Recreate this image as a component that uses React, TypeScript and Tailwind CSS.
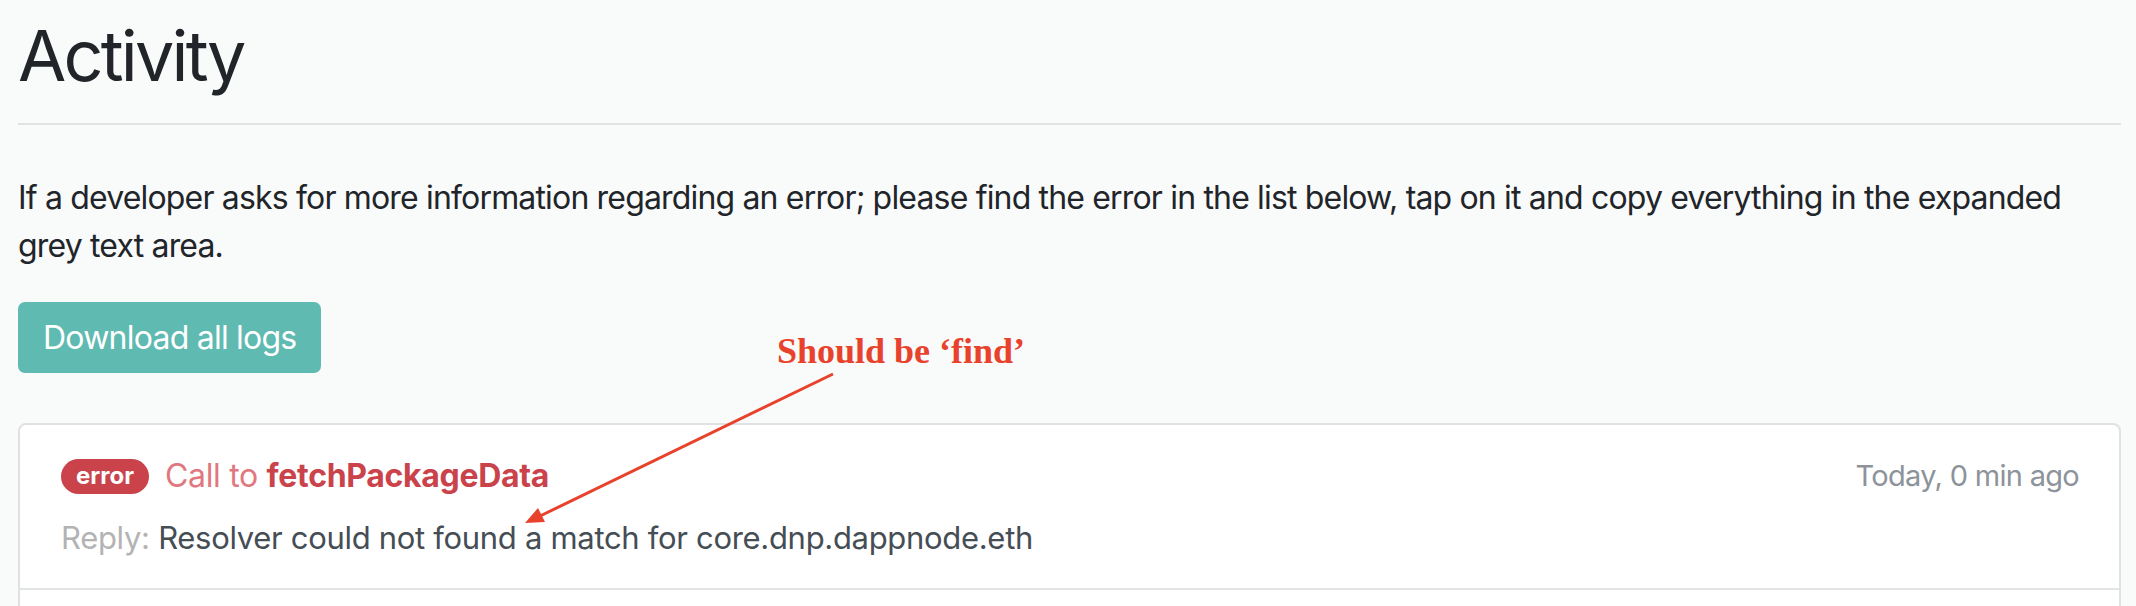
import React from "react";

type LogEntry = {
  level: string;
  call: string;
  time: string;
  reply: string;
};

const logs: LogEntry[] = [
  {
    level: "error",
    call: "fetchPackageData",
    time: "Today, 0 min ago",
    reply: "Resolver could not found a match for core.dnp.dappnode.eth",
  },
  {
    level: "error",
    call: "fetchDirectory",
    time: "Today, 1 min ago",
    reply: "Resolver could not found a match for core.dnp.dappnode.eth",
  },
];

function LogRow({ log }: { log: LogEntry }) {
  return (
    <div className="border-b-2 border-[#e3e4e6] pl-[41px] pr-[40px] pt-[27px] pb-[26px]">
      <div className="flex h-[48px] items-center justify-between">
        <div className="flex items-center gap-[16px]">
          <span className="flex h-[35px] items-center rounded-full bg-[#ca434b] px-[15px] text-[24px] font-bold text-white">
            {log.level}
          </span>
          <span className="text-[32px] tracking-[-0.01em] text-[#e17880]">
            Call to{" "}
            <span className="font-bold text-[#ca434b]">{log.call}</span>
          </span>
        </div>
        <span className="text-[29px] tracking-[-0.024em] text-[#8d939a]">
          {log.time}
        </span>
      </div>
      <div className="mt-[14px] h-[48px] text-[31px] leading-[48px] tracking-[-0.01em]">
        <span className="text-[#b3b3b3]">Reply:</span>{" "}
        <span className="text-[#454d55]">{log.reply}</span>
      </div>
    </div>
  );
}

export default function App() {
  return (
    <div
      className="relative min-h-screen bg-[#f9fafa] pl-[18px] pr-[15px] pt-[13px] text-[#212529]"
      style={{ fontFamily: "Inter, 'Noto Sans', sans-serif" }}
    >
      <h1 className="text-[70px] leading-[86px] font-normal tracking-[-0.04em]">
        Activity
      </h1>
      <hr className="mt-[24px] border-t-2 border-[#e0e2e4]" />

      <p className="mt-[49px] max-w-[2090px] text-[32px] leading-[48px] tracking-[-0.026em]">
        If a developer asks for more information regarding an error; please
        find the error in the list below, tap on it and copy everything in the
        expanded grey text area.
      </p>

      <button className="mt-[32px] flex h-[71px] items-center rounded-[7px] bg-[#5fbab1] px-[25px] text-[32px] tracking-[-0.024em] text-white">
        Download all logs
      </button>

      <div className="mt-[50px] overflow-hidden rounded-[8px] border-2 border-[#e0e1e3] bg-white">
        {logs.map((log, i) => (
          <LogRow key={i} log={log} />
        ))}
      </div>

      {/* review annotation drawn over the page */}
      <span
        className="absolute left-[777px] top-[333px] text-[36px] leading-[36px] font-bold text-[#e8412c]"
        style={{ fontFamily: "'Liberation Serif', serif" }}
      >
        Should be ‘find’
      </span>
      <svg
        className="pointer-events-none absolute left-0 top-0"
        width="2136"
        height="606"
      >
        <line
          x1="833"
          y1="374"
          x2="538"
          y2="517"
          stroke="#e8412c"
          strokeWidth="3"
        />
        <polygon points="525,523 538,508 545,522" fill="#e8412c" />
      </svg>
    </div>
  );
}
